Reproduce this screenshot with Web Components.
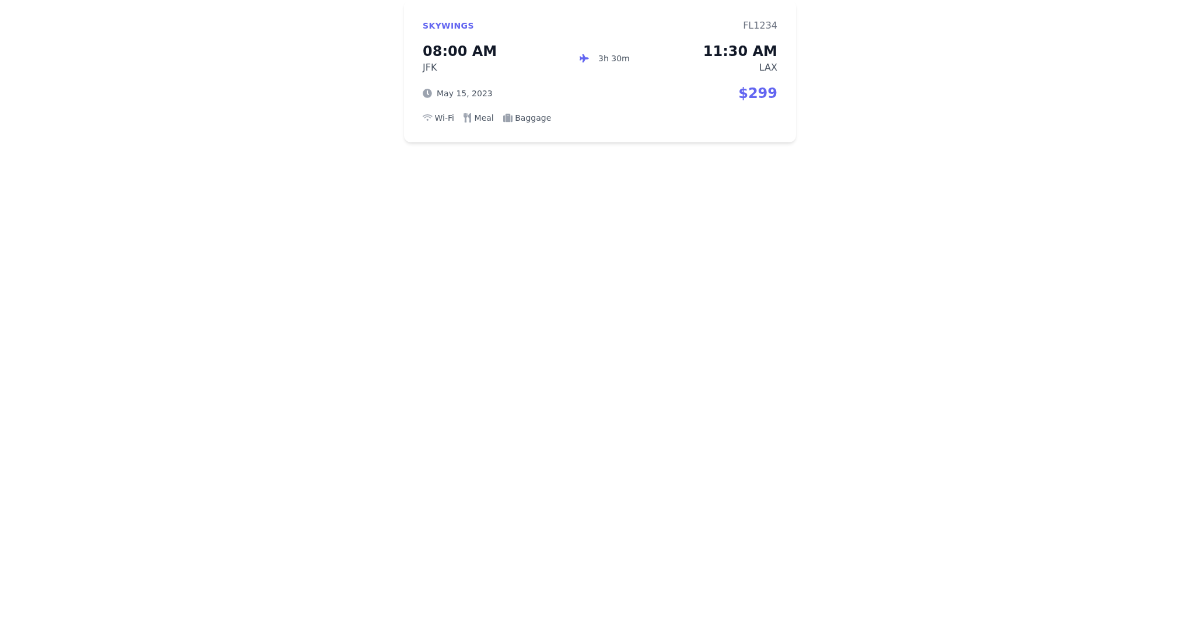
<!DOCTYPE html>
<html>
<head>
<meta charset="utf-8">
<style>
  html, body { margin: 0; padding: 0; background: #fff; }
  body { font-family: "DejaVu Sans", sans-serif; overflow: hidden; }
</style>
</head>
<body>
<flight-card></flight-card>
<script>
const ICONS = {
  plane: [576, '<path d="M480 192H365.71L260.61 8.06A16.014 16.014 0 0 0 246.71 0h-65.5c-10.63 0-18.3 10.17-15.38 20.39L214.86 192H112l-43.2-57.6c-3.02-4.03-7.77-6.4-12.8-6.4H16.01C5.6 128-2.04 137.78.49 147.88L32 256 .49 364.12C-2.04 374.22 5.6 384 16.01 384H56c5.04 0 9.78-2.37 12.8-6.4L112 320h102.86l-49.03 171.6c-2.92 10.22 4.75 20.4 15.38 20.4h65.5c5.74 0 11.04-3.08 13.89-8.06L365.71 320H480c35.35 0 96-28.65 96-64s-60.65-64-96-64z"/>'],
  clock: [512, '<path d="M256,8C119,8,8,119,8,256S119,504,256,504,504,393,504,256,393,8,256,8Zm92.49,313h0l-20,25a16,16,0,0,1-22.49,2.5h0l-67-49.72a40,40,0,0,1-15-31.23V112a16,16,0,0,1,16-16h32a16,16,0,0,1,16,16V256l58,42.5A16,16,0,0,1,348.49,321Z"/>'],
  // thin arcs, the heavy solid wifi came out too dark at this scale
  wifi: [640, '<g fill="none" stroke="currentColor" stroke-width="58" stroke-linecap="round"><path d="M30 172C190 32 450 32 610 172"/><path d="M125 272C240 172 400 172 515 272"/></g><circle cx="320" cy="400" r="62"/>'],
  meal: [416, '<path d="M207.9 15.2c.8 4.7 16.1 94.5 16.1 128.8 0 52.3-27.8 89.6-68.9 104.6L168 486.7c.7 13.7-10.2 25.3-24 25.3H80c-13.7 0-24.7-11.5-24-25.3l12.9-238.1C27.7 233.6 0 196.2 0 144 0 109.6 15.3 19.9 16.1 15.2 19.3-5.1 61.4-5.4 64 16.3v141.2c1.3 3.4 15.1 3.2 16 0 1.4-25.3 7.9-139.2 8-141.8 3.3-20.8 44.7-20.8 47.9 0 .2 2.7 6.6 116.5 8 141.8.9 3.2 14.8 3.4 16 0V16.3c2.6-21.6 44.8-21.4 48-1.1zm119.2 285.7l-15 185.1c-1.2 14 9.9 26 23.9 26h56c13.3 0 24-10.7 24-24V24c0-13.2-10.7-24-24-24-82.5 0-221.4 178.5-64.9 300.9z"/>'],
  bag: [512, '<path stroke="currentColor" stroke-width="12" d="M128 480h256V80c0-26.5-21.5-48-48-48H176c-26.5 0-48 21.5-48 48v400zm64-384h128v32H192V96zm320 80v256c0 26.5-21.5 48-48 48h-48V128h48c26.5 0 48 21.5 48 48zM96 480H48c-26.5 0-48-21.5-48-48V176c0-26.5 21.5-48 48-48h48v352z"/>']
};

class SvgIcon extends HTMLElement {
  connectedCallback() {
    const [w, body] = ICONS[this.getAttribute('name')];
    const h = this.getAttribute('size') || 14;
    this.attachShadow({ mode: 'open' });
    this.shadowRoot.innerHTML = `
      <style>
        :host { display: inline-flex; flex: none; color: var(--icon-color, #9ca3af); }
        svg { display: block; fill: currentColor; }
      </style>
      <svg height="${h}" width="${h * w / 512}" viewBox="0 0 ${w} 512">${body}</svg>`;
  }
}

class AmenityItem extends HTMLElement {
  connectedCallback() {
    this.attachShadow({ mode: 'open' });
    this.shadowRoot.innerHTML = `
      <style>
        :host { display: flex; align-items: center; gap: ${this.getAttribute('gap') || 4}px; font-size: 14px; line-height: 20px; color: #4b5563; }
      </style>
      <svg-icon name="${this.getAttribute('icon')}" size="${this.getAttribute('size') || 14}"></svg-icon>
      <slot></slot>`;
  }
}

class FlightPoint extends HTMLElement {
  connectedCallback() {
    const right = this.hasAttribute('right');
    this.attachShadow({ mode: 'open' });
    this.shadowRoot.innerHTML = `
      <style>
        :host { display: block; text-align: ${right ? 'right' : 'left'}; }
        .time { font-size: 24px; line-height: 32px; font-weight: 700; color: #111827; }
        .code { font-size: 16px; line-height: 24px; color: #4b5563; }
      </style>
      <div class="time">${this.getAttribute('time')}</div>
      <div class="code">${this.getAttribute('code')}</div>`;
  }
}

class FlightCard extends HTMLElement {
  connectedCallback() {
    this.attachShadow({ mode: 'open' });
    this.shadowRoot.innerHTML = `
      <style>
        :host { display: block; box-sizing: border-box; width: 672px; margin: 0 auto; padding: 32px; background: #fff; border-radius: 12px;
          box-shadow: 0 4px 6px -1px rgba(0,0,0,.1), 0 2px 4px -1px rgba(0,0,0,.06);
          transform: scale(.58333); transform-origin: top center; will-change: transform; }
        .top, .route, .mid { display: flex; justify-content: space-between; align-items: center; }
        .top { margin-bottom: 16px; }
        .airline { font-size: 14px; line-height: 20px; font-weight: 700; letter-spacing: .35px; color: #6366f1; }
        .number { font-size: 16px; line-height: 24px; color: #6b7280; }
        .route { margin-bottom: 16px; }
        .duration { display: flex; align-items: center; gap: 16px; padding-left: 16px; font-size: 14px; line-height: 20px; color: #4b5563; --icon-color: #6366f1; }
        .mid { margin-bottom: 16px; }
        .date { display: flex; align-items: center; gap: 8px; font-size: 14px; line-height: 20px; color: #4b5563; }
        .price { font-size: 24px; line-height: 32px; font-weight: 700; color: #6366f1; }
        .amenities { display: flex; gap: 16.5px; }
      </style>
      <div class="top"><div class="airline">SKYWINGS</div><div class="number">FL1234</div></div>
      <div class="route">
        <flight-point time="08:00 AM" code="JFK"></flight-point>
        <div class="duration"><svg-icon name="plane" size="14"></svg-icon><span>3h 30m</span></div>
        <flight-point right time="11:30 AM" code="LAX"></flight-point>
      </div>
      <div class="mid">
        <div class="date"><svg-icon name="clock" size="16"></svg-icon><span>May 15, 2023</span></div>
        <div class="price">$299</div>
      </div>
      <div class="amenities">
        <amenity-item icon="wifi" size="13.2">Wi-Fi</amenity-item>
        <amenity-item icon="meal" size="16" gap="5.2">Meal</amenity-item>
        <amenity-item icon="bag" size="16">Baggage</amenity-item>
      </div>`;
  }
}

customElements.define('svg-icon', SvgIcon);
customElements.define('amenity-item', AmenityItem);
customElements.define('flight-point', FlightPoint);
customElements.define('flight-card', FlightCard);
</script>
</body>
</html>
